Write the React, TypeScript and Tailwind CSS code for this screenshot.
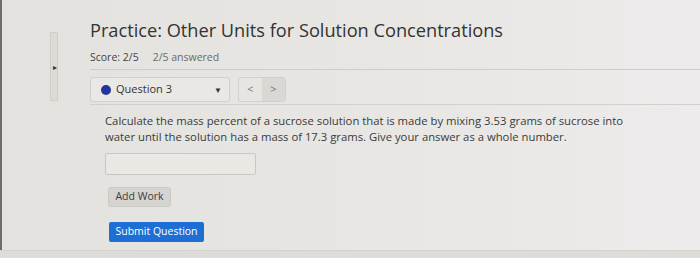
import React from "react";

export default function App() {
  return (
    <div
      className="w-[700px] h-[258px] overflow-hidden relative flex flex-col bg-gradient-to-r from-[#e3e2de] via-[#e7e6e2] to-[#eeebec] text-[#3b3b3b]"
      style={{ fontFamily: '"Open Sans", "Noto Sans", sans-serif' }}
    >
      <div className="flex flex-1 border-l-2 border-[#6d6c68]">
        {/* left collapse rail */}
        <div className="w-[88px] shrink-0 pt-[32px] pl-[48px]">
          <div className="w-[8px] h-[69px] bg-[#dcdbd7] border border-[#cfcec9] flex items-center justify-center">
            <span className="text-[8px] leading-none text-[#333] ml-[1px]">▸</span>
          </div>
        </div>
        {/* main */}
        <div className="flex-1 flex flex-col pt-[17px]">
          <div className="flex items-start justify-between">
            <h1 className="text-[18.2px] leading-[26px] text-[#333]">
              Practice: Other Units for Solution Concentrations
            </h1>
            <span className="text-[13px] text-[#8a6f70] mr-[-6px] mt-[2px]">F</span>
          </div>
          <div className="flex gap-[14px] text-[10.5px] mt-[7px] leading-[14px]">
            <span className="text-[#444]">Score: 2/5</span>
            <span className="text-[#6a6a6a]">2/5 answered</span>
          </div>
          <div className="border-t border-[#cfcdc9] mt-[5px] pt-[7px] pb-[1px] flex gap-[8px] items-center">
            <div className="w-[140px] h-[25px] border border-[#d2d0cc] rounded-[3px] bg-[#e9e8e4] flex items-center pl-[10px] pr-[7px]">
              <span className="w-[10px] h-[10px] rounded-full bg-[#22359a]" />
              <span className="ml-[5px] text-[11px] text-[#333]">Question 3</span>
              <span className="ml-auto text-[8px] text-[#333]">▼</span>
            </div>
            <div className="w-[48px] h-[25px] border border-[#d2d0cc] rounded-[3px] bg-[#e6e5e1] flex overflow-hidden">
              <div className="flex-1 flex items-center justify-center text-[11px] text-[#777]">&lt;</div>
              <div className="flex-1 flex items-center justify-center text-[11px] text-[#777] bg-[#d9d8d4]">&gt;</div>
            </div>
          </div>
          <div className="border-t border-[#d2d0cc] mt-[1px]" />
          <div className="pl-[15px] pt-[8px]">
            <p className="text-[11.3px] leading-[16px] text-[#3a3a3a] w-[530px]">
              Calculate the mass percent of a sucrose solution that is made by mixing 3.53 grams of sucrose into water until the solution has a mass of 17.3 grams. Give your answer as a whole number.
            </p>
            <div className="mt-[8px] w-[151px] h-[22px] border border-[#c9c7c2] rounded-[2px] bg-[#e9e8e4]" />
            <div className="mt-[12px] ml-[3px] w-[63px] h-[20px] rounded-[3px] bg-[#d5d4d0] border border-[#cac9c4] flex items-center justify-center text-[10.5px] text-[#3d3d3d]">
              Add Work
            </div>
            <div className="mt-[15px] ml-[4px] w-[95px] h-[20px] rounded-[2px] bg-[#1d6fd6] flex items-center justify-center text-[10.5px] text-white">
              Submit Question
            </div>
          </div>
        </div>
      </div>
      <div className="h-[8px] bg-[#dddcd8] border-t border-[#d3d2ce]" />
    </div>
  );
}
